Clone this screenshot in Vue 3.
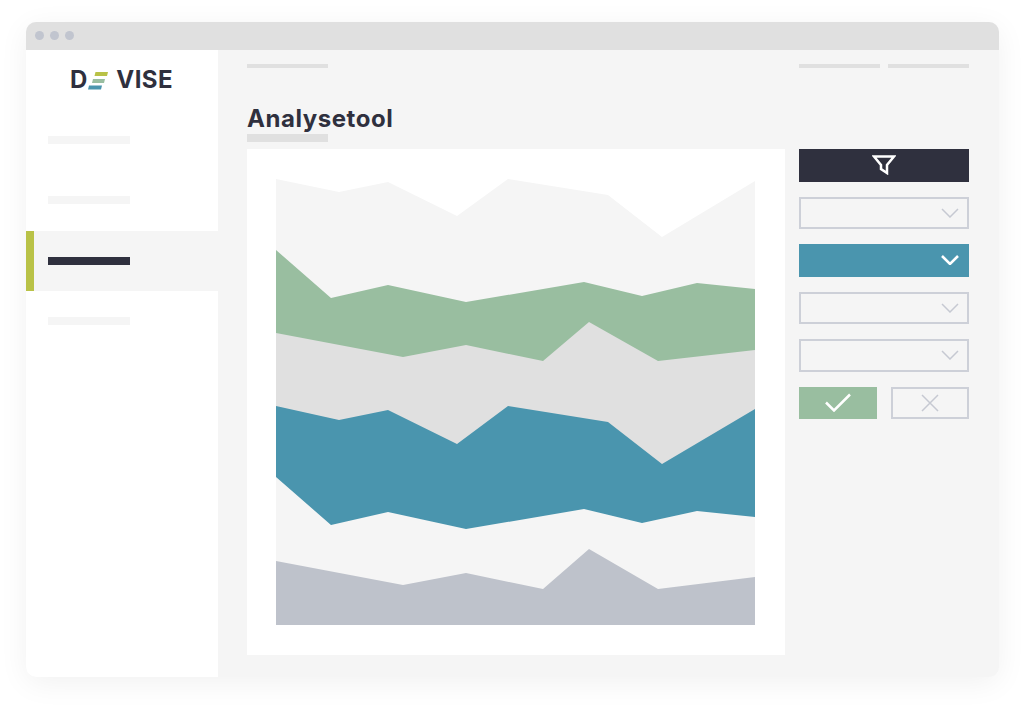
<script setup>
const navItems = [{ active: false }, { active: false }, { active: true }, { active: false }]

const selects = [{ active: false }, { active: true }, { active: false }, { active: false }]

// chart bands, painted top to bottom so each one covers the rest of the plot
const bands = [
  { fill: '#f5f5f5', top: '276,179 339,192 388,182 457,216 508,179 608,195 662,237 755,181' },
  { fill: '#99bea0', top: '276,250 331,298 388,285 466,302 584,282 642,296 697,283 755,289' },
  { fill: '#e0e0e0', top: '276,333 403,357 466,345 543,361 589,322 658,361 755,350' },
  { fill: '#4a95ae', top: '276,406 339,420 388,410 457,444 508,406 608,422 662,464 755,409' },
  { fill: '#f5f5f5', top: '276,477 331,525 388,512 466,529 584,509 642,523 697,511 755,517' },
  { fill: '#bec2cb', top: '276,561 403,585 466,573 543,589 589,549 658,589 755,577' }
]

const bandPoints = (band) => `${band.top} 755,625 276,625`
</script>

<template>
  <div class="page">
    <div class="window">
      <div class="titlebar">
        <span class="dot"></span>
        <span class="dot"></span>
        <span class="dot"></span>
      </div>
      <div class="body">
        <aside class="sidebar">
          <div class="logo">
            <span>D</span>
            <svg class="logo-bars" width="21" height="19" viewBox="0 0 21 19">
              <path d="M7.500 1H20L19 5H6.500Z" fill="#b9c247" />
              <path d="M5 8H17L16 12H4Z" fill="#99bea0" />
              <path d="M1 14.500H14L13 18.500H0Z" fill="#4a95ae" />
            </svg>
            <span class="logo-rest">VISE</span>
          </div>
          <div
            v-for="(item, i) in navItems"
            :key="i"
            class="nav-item"
            :class="{ active: item.active }"
          >
            <span class="nav-line"></span>
          </div>
        </aside>

        <main class="main">
          <div class="topbar">
            <span class="line"></span>
            <div class="topbar-right">
              <span class="line"></span>
              <span class="line"></span>
            </div>
          </div>
          <h1 class="title">Analysetool</h1>
          <span class="subtitle"></span>
          <div class="content">
            <section class="card">
              <svg class="chart" width="479" height="447" viewBox="276 178 479 447">
                <polygon
                  v-for="(band, i) in bands"
                  :key="i"
                  :points="bandPoints(band)"
                  :fill="band.fill"
                />
              </svg>
            </section>

            <div class="filters">
              <button class="filter-btn">
                <svg width="24" height="20" viewBox="0 0 24 20" fill="none">
                  <path
                    d="M2 1.500H22L15 10V18L9 14V10Z"
                    stroke="#fff"
                    stroke-width="2.500"
                    stroke-linejoin="miter"
                  />
                </svg>
              </button>
              <div
                v-for="(select, i) in selects"
                :key="i"
                class="select"
                :class="{ active: select.active }"
              >
                <svg width="18" height="10" viewBox="0 0 18 10" fill="none">
                  <path d="M1 1L9 9L17 1" />
                </svg>
              </div>
              <div class="actions">
                <button class="confirm">
                  <svg width="26" height="19" viewBox="0 0 26 19" fill="none">
                    <path d="M1 9.500L9 17.500L25 1.500" stroke="#fff" stroke-width="2.500" />
                  </svg>
                </button>
                <button class="cancel">
                  <svg width="18" height="18" viewBox="0 0 18 18" fill="none">
                    <path d="M1 1L17 17M17 1L1 17" stroke="#c6c9d2" stroke-width="1.500" />
                  </svg>
                </button>
              </div>
            </div>
          </div>
        </main>
      </div>
    </div>
  </div>
</template>

<style>
html, body {
  background: #fff;
}
</style>

<style scoped>
.page {
  width: 1024px;
  height: 706px;
  padding: 22px 25px 29px 26px;
  box-sizing: border-box;
  overflow: hidden;
}
.window {
  height: 100%;
  display: flex;
  flex-direction: column;
  border-radius: 10px;
  overflow: hidden;
  background: #f5f5f5;
  box-shadow: 0 6px 30px rgba(0, 0, 0, 0.06);
}
.titlebar {
  height: 28px;
  flex: none;
  box-sizing: border-box;
  display: flex;
  align-items: center;
  gap: 6px;
  padding: 0 0 2px 9px;
  background: #e0e0e0;
}
.dot {
  width: 9px;
  height: 9px;
  border-radius: 50%;
  background: #c1c5cf;
}
.body {
  flex: 1;
  display: flex;
  min-height: 0;
}
.sidebar {
  width: 192px;
  flex: none;
  background: #fff;
}
.logo {
  height: 60px;
  display: flex;
  align-items: center;
  padding-left: 44px;
  font-family: Inter, "Liberation Sans", sans-serif;
  font-size: 24px;
  font-weight: 700;
  color: #2f303e;
  line-height: 1;
}
.logo-bars {
  margin-left: 1px;
  margin-right: 7px;
}
.logo-rest {
  letter-spacing: 0.4px;
}
.nav-item {
  height: 60.300px;
  display: flex;
  align-items: center;
  padding-left: 22px;
}
.nav-item.active {
  padding-left: 14px;
  background: #f5f5f5;
  border-left: 8px solid #b9c247;
}
.nav-line {
  width: 82px;
  height: 8px;
  background: #f5f5f5;
}
.nav-item.active .nav-line {
  background: #2f303e;
}
.main {
  flex: 1;
  padding: 14px 30px 0 29px;
}
.topbar {
  display: flex;
  justify-content: space-between;
}
.topbar-right {
  display: flex;
  gap: 8px;
}
.line {
  display: block;
  width: 81px;
  height: 4px;
  background: #e0e0e0;
}
.title {
  margin: 36px 0 0;
  height: 30px;
  font-family: Inter, "Liberation Sans", sans-serif;
  font-size: 24px;
  font-weight: 700;
  line-height: 30px;
  letter-spacing: 0.55px;
  color: #2f303e;
}
.subtitle {
  display: block;
  width: 81px;
  height: 8px;
  background: #e0e0e0;
}
.content {
  display: flex;
  gap: 14px;
  margin-top: 7px;
}
.card {
  width: 538px;
  height: 506px;
  box-sizing: border-box;
  padding: 29px;
  background: #fff;
}
.chart {
  display: block;
}
.filters {
  width: 170px;
  display: flex;
  flex-direction: column;
  gap: 15px;
}
.filter-btn {
  height: 32.500px;
  display: flex;
  align-items: center;
  justify-content: center;
  padding: 0;
  border: 0;
  background: #2f303e;
}
.select {
  height: 32.500px;
  box-sizing: border-box;
  display: flex;
  align-items: center;
  justify-content: flex-end;
  padding-right: 8px;
  border: 2px solid #cdd0d8;
}
.select svg {
  stroke: #c6c9d2;
  stroke-width: 1.500;
}
.select.active {
  border: 0;
  padding-right: 10px;
  background: #4a95ae;
}
.select.active svg {
  stroke: #fff;
  stroke-width: 2.500;
}
.actions {
  display: flex;
  justify-content: space-between;
}
.actions button {
  width: 78px;
  height: 32.500px;
  box-sizing: border-box;
  display: flex;
  align-items: center;
  justify-content: center;
  padding: 0;
}
.confirm {
  border: 0;
  background: #99bea0;
}
.cancel {
  border: 2px solid #cdd0d8;
  background: transparent;
}
</style>
